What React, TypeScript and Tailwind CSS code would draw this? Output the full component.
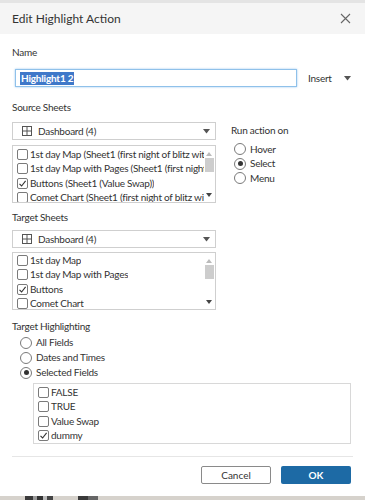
import React from 'react'

const font = { fontFamily: 'Lato, "Liberation Sans", sans-serif' }
const txt = 'text-[10px] tracking-[-0.25px] text-[#333]'

function Check({ on }: { on?: boolean }) {
  return (
    <span className="w-[11px] h-[11px] border border-[#7a7a7a] rounded-[2px] bg-white flex items-center justify-center shrink-0">
      {on && (
        <svg width="9" height="9" viewBox="0 0 9 9">
          <path d="M1.5 4.8 L3.6 7 L7.6 1.8" fill="none" stroke="#333" strokeWidth="1.1" />
        </svg>
      )}
    </span>
  )
}

function Radio({ on }: { on?: boolean }) {
  return (
    <span className="w-[12px] h-[12px] rounded-full border border-[#7a7a7a] bg-white flex items-center justify-center shrink-0">
      {on && <span className="w-[5px] h-[5px] rounded-full bg-[#333]" />}
    </span>
  )
}

function Caret() {
  return (
    <svg width="7" height="5" viewBox="0 0 7 5">
      <path d="M0 0 L7 0 L3.5 4.5 Z" fill="#555" />
    </svg>
  )
}

function Dropdown() {
  return (
    <div className="w-[204px] h-[18px] border border-[#cfcfcf] bg-white flex items-center pl-[9px] pr-[5px]">
      <svg width="10" height="10" viewBox="0 0 10 10" className="shrink-0">
        <rect x="0.5" y="0.5" width="9" height="9" fill="none" stroke="#555" />
        <path d="M5 0.5 V9.5 M0.5 5 H9.5" stroke="#555" />
      </svg>
      <span className={`ml-[6px] ${txt}`}>Dashboard (4)</span>
      <span className="ml-auto">
        <Caret />
      </span>
    </div>
  )
}

function SheetList({ items, target }: { items: { label: string; on?: boolean }[]; target?: boolean }) {
  return (
    <div
      className={`w-[204px] h-[58px] border border-[#cfcfcf] bg-white flex overflow-hidden ${target ? 'mt-[4px]' : 'mt-[5px]'}`}
    >
      <div className={`flex-1 min-w-0 pl-[4px] ${target ? 'pt-0' : 'pt-[1px]'}`}>
        {items.map((it) => (
          <div key={it.label} className="h-[14.5px] flex items-center gap-[2px]">
            <Check on={it.on} />
            <span className={`${txt} whitespace-nowrap overflow-hidden`}>{it.label}</span>
          </div>
        ))}
      </div>
      <div className="w-[10px] mr-[1px] flex flex-col items-center bg-white">
        <svg width="6" height="4" viewBox="0 0 6 4" className="mt-[6px]">
          <path d="M0 4 L6 4 L3 0 Z" fill="#bbb" />
        </svg>
        <div className="w-[9px] h-[14px] bg-[#cdcdcd] mt-[2px]" />
        <svg width="6" height="4" viewBox="0 0 6 4" className="mt-auto mb-[5px]">
          <path d="M0 0 L6 0 L3 4 Z" fill="#444" />
        </svg>
      </div>
    </div>
  )
}

export default function App() {
  return (
    <div className="w-[365px] h-[500px] bg-white flex flex-col overflow-hidden" style={font}>
      <div className="h-[3px] bg-[#e4e4e4]" />
      <div className="h-[31px] bg-[#f5f5f5] flex items-center px-[12px]">
        <span className="text-[12px] text-[#333]">Edit Highlight Action</span>
        <svg width="11" height="11" viewBox="0 0 11 11" className="ml-auto mr-[2px]">
          <path d="M1 1 L10 10 M10 1 L1 10" stroke="#666" strokeWidth="1.1" />
        </svg>
      </div>

      <div className="px-[12px] flex-1 flex flex-col">
        <div className={`mt-[11px] ${txt}`}>Name</div>
        <div className="mt-[9px] flex items-center">
          <div className="ml-[3px] w-[282px] h-[18px] border border-[#8fc1ea] shadow-[0_0_2px_#9cc8ef] flex items-center pl-[4px]">
            <span className="text-[10px] tracking-[-0.2px] font-bold text-white bg-[#3f78c9] leading-[13px] px-[1px]">Highlight1 2</span>
          </div>
          <span className={`ml-[11px] ${txt}`}>Insert</span>
          <span className="ml-[12px] mt-[1px]">
            <Caret />
          </span>
        </div>

        <div className={`mt-[13px] ${txt}`}>Source Sheets</div>
        <div className="mt-[7px] flex">
          <div className="flex flex-col">
            <Dropdown />
            <SheetList
              items={[
                { label: '1st day Map (Sheet1 (first night of blitz wit' },
                { label: '1st day Map with Pages (Sheet1 (first night' },
                { label: 'Buttons (Sheet1 (Value Swap))', on: true },
                { label: 'Comet Chart (Sheet1 (first night of blitz wi' },
              ]}
            />
          </div>
          <div className="ml-[15px] flex flex-col pt-[1px]">
            <span className={txt}>Run action on</span>
            <div className="ml-[3px] mt-[4px] flex flex-col">
              {[
                ['Hover', false],
                ['Select', true],
                ['Menu', false],
              ].map(([l, on]) => (
                <div key={l as string} className="h-[14.5px] flex items-center gap-[4px]">
                  <Radio on={on as boolean} />
                  <span className={txt}>{l}</span>
                </div>
              ))}
            </div>
          </div>
        </div>

        <div className={`mt-[7px] ${txt}`}>Target Sheets</div>
        <div className="mt-[5px]">
          <Dropdown />
          <SheetList
            target
            items={[
              { label: '1st day Map' },
              { label: '1st day Map with Pages' },
              { label: 'Buttons', on: true },
              { label: 'Comet Chart' },
            ]}
          />
        </div>

        <div className={`mt-[9px] ${txt}`}>Target Highlighting</div>
        <div className="ml-[8px] mt-[1px] flex flex-col">
          {[
            ['All Fields', false],
            ['Dates and Times', false],
            ['Selected Fields', true],
          ].map(([l, on]) => (
            <div key={l as string} className="h-[15px] flex items-center gap-[4px]">
              <Radio on={on as boolean} />
              <span className={txt}>{l}</span>
            </div>
          ))}
        </div>
        <div className="ml-[21px] mt-[3px] w-[318px] h-[61px] border border-[#d8d8d8] pl-[4px] pt-[1px]">
          {[
            ['FALSE', false],
            ['TRUE', false],
            ['Value Swap', false],
            ['dummy', true],
          ].map(([l, on]) => (
            <div key={l as string} className="h-[14.5px] flex items-center gap-[2px]">
              <Check on={on as boolean} />
              <span className={txt}>{l}</span>
            </div>
          ))}
        </div>

        <div className="mt-[12px] h-px bg-[#e6e6e6]" />
        <div className="mt-[9px] flex justify-end gap-[10px] pr-[2px]">
          <button className="w-[70px] h-[18px] border border-[#8a8a8a] rounded-[2px] bg-white text-[10px] text-[#333]">Cancel</button>
          <button className="w-[70px] h-[18px] rounded-[2px] bg-[#1d6aa5] text-[10px] font-bold text-white">OK</button>
        </div>
      </div>
      <div className="h-[4px] flex">
        <div className="w-[25px] bg-[#d6d2cc]" />
        <div className="w-[8px] bg-[#3a3a3a]" />
        <div className="w-[4px] bg-[#9a9a9a]" />
        <div className="w-[6px] bg-[#333]" />
        <div className="w-[4px] bg-[#bbb]" />
        <div className="w-[6px] bg-[#444]" />
        <div className="w-[25px] bg-[#d6d2cc]" />
        <div className="w-[10px] bg-[#3a3a3a]" />
        <div className="w-[10px] bg-[#666]" />
        <div className="flex-1 bg-[#d6d2cc]" />
      </div>
    </div>
  )
}
